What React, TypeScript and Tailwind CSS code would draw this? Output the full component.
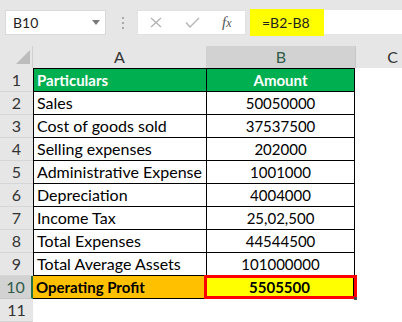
const rows = [
  { n: 2, label: 'Sales', value: '50050000' },
  { n: 3, label: 'Cost of goods sold', value: '37537500' },
  { n: 4, label: 'Selling expenses', value: '202000' },
  { n: 5, label: 'Administrative Expense', value: '1001000' },
  { n: 6, label: 'Depreciation', value: '4004000' },
  { n: 7, label: 'Income Tax', value: '25,02,500' },
  { n: 8, label: 'Total Expenses', value: '44544500' },
  { n: 9, label: 'Total Average Assets', value: '101000000' },
];

function FormulaBar() {
  return (
    <div className="flex h-[46px] items-start pt-[10px]">
      {/* name box */}
      <div className="ml-[5px] flex h-[25px] w-[101px] shrink-0 items-center justify-between bg-white pl-[7px] pr-[5px] border border-[#dadada]">
        <span className="text-[14px] text-[#222]">B10</span>
        <svg width="8" height="5" viewBox="0 0 8 5">
          <path d="M0 0h8L4 5z" fill="#7a7a7a" />
        </svg>
      </div>
      <div className="ml-[15px] flex h-[25px] w-[3px] shrink-0 flex-col items-center justify-center gap-[3px]">
        <span className="h-[2px] w-[2px] bg-[#a8a8a8]" />
        <span className="h-[2px] w-[2px] bg-[#a8a8a8]" />
        <span className="h-[2px] w-[2px] bg-[#a8a8a8]" />
      </div>
      {/* cancel / enter / fx */}
      <div className="ml-[13px] flex h-[25px] w-[109px] shrink-0 items-center bg-white border border-[#e2e2e2]">
        <svg className="ml-[12px]" width="12" height="11" viewBox="0 0 12 11">
          <path d="M1 1l10 9M11 1L1 10" stroke="#b4b4b4" strokeWidth="1.4" fill="none" />
        </svg>
        <svg className="ml-[23px]" width="15" height="11" viewBox="0 0 15 11">
          <path d="M1 5.5l4 4.5L14 1" stroke="#b4b4b4" strokeWidth="1.4" fill="none" />
        </svg>
        <span className="ml-[22px] font-['Liberation_Serif',serif] text-[15px] italic leading-none text-[#555]">
          f<span className="text-[12px]">x</span>
        </span>
      </div>
      {/* formula input */}
      <div className="ml-[4px] flex h-[24px] flex-1 bg-white">
        <div className="-mt-[1px] flex h-[27px] w-[74px] items-center bg-[#ffff00] pl-[12px] text-[14px] text-[#222]">
          =B2-B8
        </div>
      </div>
    </div>
  );
}

function RowHead({ n, active }: { n: number; active?: boolean }) {
  return (
    <div
      className={
        active
          ? 'flex w-[33px] shrink-0 items-center justify-center border-b border-r-2 border-b-[#c6c6c6] border-r-[#217346] bg-[#d2d2d2] text-[#2f5c48]'
          : 'flex w-[33px] shrink-0 items-center justify-center border-b border-[#d6d6d6] text-[#333]'
      }
    >
      {n}
    </div>
  );
}

export default function App() {
  return (
    <div className="relative h-[322px] w-[402px] overflow-hidden bg-[#e6e6e6] font-['Lato',sans-serif]">
      <FormulaBar />

      {/* column headers */}
      <div className="flex h-[22px] text-[16px] text-[#333]">
        <div className="relative w-[33px] shrink-0 border-r border-[#d0d0d0]">
          <svg className="absolute left-[16px] top-[4px]" width="14" height="14" viewBox="0 0 14 14">
            <path d="M14 0v14H0z" fill="#bcbcbc" />
          </svg>
        </div>
        <div className="flex w-[174px] shrink-0 items-center justify-center border-r border-[#d0d0d0]">A</div>
        <div className="flex w-[148px] shrink-0 items-center justify-center bg-[#d2d2d2] text-[#2f5c48]">B</div>
        <div className="flex w-[74px] shrink-0 items-center justify-center border-l border-[#c6c6c6]">C</div>
      </div>

      {/* sheet body */}
      <div className="flex flex-col text-[15px]">
        <div className="flex h-[24px]">
          <div className="flex w-[33px] shrink-0 items-center justify-center border-b border-[#d6d6d6] pt-[1px] text-[16px] text-[#333]">1</div>
          <div className="flex w-[174px] shrink-0 items-center border border-black bg-[#00b050] pl-[3px] font-bold text-white">
            Particulars
          </div>
          <div className="flex w-[148px] shrink-0 items-center justify-center border-y border-r border-black bg-[#00b050] font-bold text-white">
            Amount
          </div>
          <div className="flex-1 bg-white" />
        </div>

        {rows.map((r) => (
          <div key={r.n} className="flex h-[23px]">
            <div className="flex w-[33px] shrink-0 items-center justify-center border-b border-[#d6d6d6] text-[16px] text-[#333]">
              {r.n}
            </div>
            <div className="flex w-[174px] shrink-0 items-center border-x border-b border-black bg-white pl-[3px] text-[16px] text-black">
              {r.label}
            </div>
            <div className="flex w-[148px] shrink-0 items-center justify-center border-b border-r border-black bg-white text-black">
              {r.value}
            </div>
            <div className="flex-1 bg-white" />
          </div>
        ))}

        <div className="flex h-[23px] text-[16px]">
          <RowHead n={10} active />
          <div className="flex w-[172px] shrink-0 items-center border-b border-black bg-[#ffc000] pl-[3px] text-[15px] font-bold text-black">
            Operating Profit
          </div>
          <div className="flex w-[149px] shrink-0 items-center justify-center border-x border-b border-black bg-[#ffff00] text-[15px] font-bold text-black">
            5505500
          </div>
          <div className="flex-1 bg-white" />
        </div>

        <div className="flex h-[23px] text-[16px]">
          <RowHead n={11} />
          <div className="flex-1 bg-white" />
        </div>
      </div>

      {/* active cell selection */}
      <div className="absolute left-[204px] top-[275px] h-[24px] w-[153px] border-[3px] border-[#ff0000]" />
      <div className="absolute left-[354px] top-[297px] h-[3px] w-[3px] bg-[#4a4a4a]" />
    </div>
  );
}
